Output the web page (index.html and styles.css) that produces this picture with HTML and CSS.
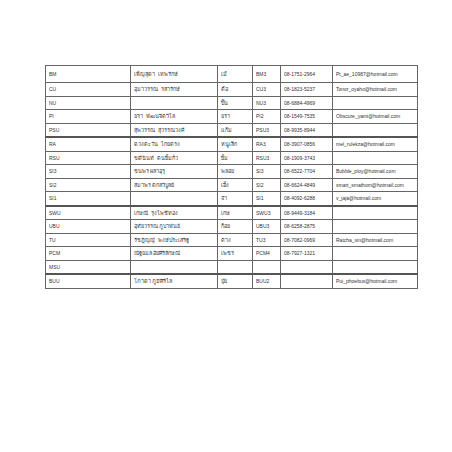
FILE: index.html
```html
<!DOCTYPE html>
<html>
<head>
<meta charset="utf-8">
<link rel="stylesheet" href="styles.css">
</head>
<body>
<div class="page">
<table class="sheet">
<colgroup>
<col class="c1"><col class="c2"><col class="c3"><col class="c4"><col class="c5"><col class="c6">
</colgroup>
<tr class="first"><td>BM</td><td class="th">เพ็ญสุดา&nbsp;&nbsp;เทพรักษ์</td><td class="th">เม้</td><td>BM3</td><td>08-1751-2964</td><td>Pt_ae_10987@hotmail.com</td></tr>
<tr><td>CU</td><td class="th">อุมาวรรณ&nbsp;&nbsp;รสารักษ์</td><td class="th">ต้อ</td><td>CU3</td><td>08-1823-5237</td><td>Tonor_oyaho@hotmail.com</td></tr>
<tr><td>NU</td><td class="th"></td><td class="th">ปิ๊น</td><td>NU3</td><td>08-6884-4969</td><td></td></tr>
<tr><td>PI</td><td class="th">ธรา&nbsp;&nbsp;พัฒนจิตวิไล</td><td class="th">ธรา</td><td>PI2</td><td>08-1549-7535</td><td>Obscure_yami@hotmail.com</td></tr>
<tr class="thick"><td>PSU</td><td class="th">สุพวรรณ&nbsp;&nbsp;สุวรรณวงศ์</td><td class="th">แก้ม</td><td>PSU3</td><td>08-9935-8944</td><td></td></tr>
<tr><td>RA</td><td class="th">ดวงตะวัน&nbsp;&nbsp;ไกยตรง</td><td class="th">หนูเล็ก</td><td>RA3</td><td>08-3907-0856</td><td>mel_rulekza@hotmail.com</td></tr>
<tr><td>RSU</td><td class="th">ขดีนันท์&nbsp;&nbsp;ตนยิ้มกั๋ว</td><td class="th">ยิ้ม</td><td>RSU3</td><td>08-1909-3743</td><td></td></tr>
<tr><td>SI3</td><td class="th">ชนพร&nbsp;ผลาอุรุ</td><td class="th">พลอย</td><td>SI3</td><td>08-6522-7704</td><td>Bubble_ploy@hotmail.com</td></tr>
<tr><td>SI2</td><td class="th">สมาพร&nbsp;ตกลวิบูลย์</td><td class="th">เอิ้ง</td><td>SI2</td><td>08-6624-4849</td><td>smart_smathom@hotmail.com</td></tr>
<tr class="thick"><td>SI1</td><td class="th"></td><td class="th">จ๋า</td><td>SI1</td><td>08-4092-6288</td><td>v_jaja@hotmail.com</td></tr>
<tr><td>SWU</td><td class="th">เกษณี&nbsp;&nbsp;รุ่งไพชีทอง</td><td class="th">เกษ</td><td>SWU3</td><td>08-9449-3184</td><td></td></tr>
<tr><td>UBU</td><td class="th">อุทัยวรรณ&nbsp;ภูบาพันธ์</td><td class="th">ก้อย</td><td>UBU3</td><td>08-6258-2875</td><td></td></tr>
<tr><td>TU</td><td class="th">รัชฎิญญ์&nbsp;&nbsp;พงษ์ประเสริฐ</td><td class="th">ต่าง</td><td>TU3</td><td>08-7082-0969</td><td>Ratcha_sin@hotmail.com</td></tr>
<tr><td>PCM</td><td class="th">ณัฐธมล&nbsp;อัยศิริลักษณ์</td><td class="th">เพชร</td><td>PCM4</td><td>08-7927-1321</td><td></td></tr>
<tr class="thick"><td>MSU</td><td class="th"></td><td class="th"></td><td></td><td></td><td></td></tr>
<tr><td>BUU</td><td class="th">โภาดา&nbsp;ภูมิศิริไล</td><td class="th">ปุ๋ย</td><td>BUU2</td><td></td><td>Pui_phoebus@hotmail.com</td></tr>
</table>
</div>
</body>
</html>
```
FILE: styles.css
```css
html, body {
  margin: 0;
  padding: 0;
  background: #ffffff;
}
.page {
  padding: 65px 0 0 45px;
}
.sheet {
  border-collapse: collapse;
  table-layout: fixed;
  width: 372px;
  font-family: "Liberation Sans", Arial, sans-serif;
  font-size: 5px;
  color: #333333;
}
.c1 { width: 85px; }
.c2 { width: 87px; }
.c3 { width: 35px; }
.c4 { width: 28px; }
.c5 { width: 52px; }
.c6 { width: 85px; }
.sheet td {
  border: 1px solid #666666;
  height: 12.5px;
  padding: 0 0 0 3px;
  line-height: 8px;
  white-space: nowrap;
  overflow: hidden;
  vertical-align: middle;
}
.sheet tr.first td {
  height: 16px;
}
.sheet tr.thick td {
  border-bottom: 2px solid #555555;
}
.sheet td.th {
  font-size: 5.5px;
  font-family: "Noto Sans", "DejaVu Sans", sans-serif;
  color: #3a3a3a;
}
```
